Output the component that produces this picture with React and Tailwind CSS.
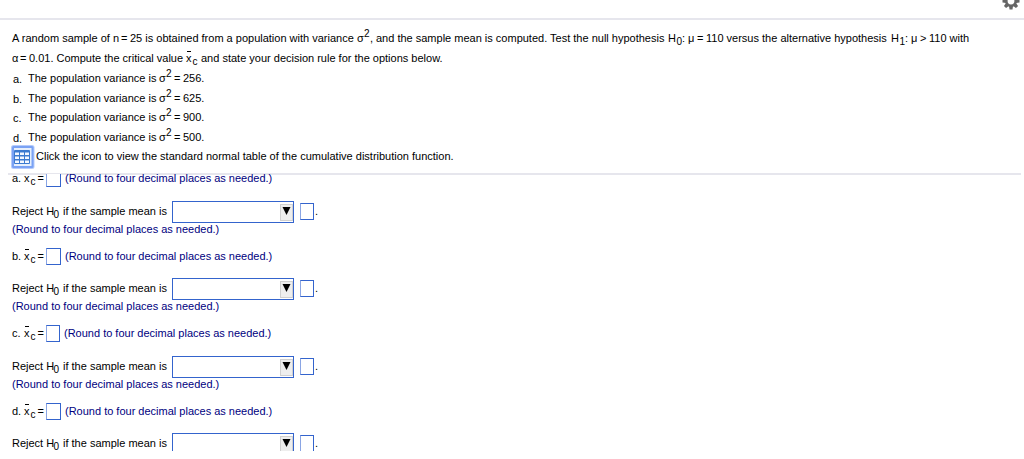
import clsx from "clsx";

const parts = [
  { label: "a.", value: "256.", row: "mb-1" },
  { label: "b.", value: "625.", row: "mb-[3px]" },
  { label: "c.", value: "900.", row: "mb-1" },
  { label: "d.", value: "500.", row: "mb-[3px]" },
];

// spacing differs by a pixel between the answers
const answers = [
  { label: "a.", block: "h-[78px]", gap: "mb-[14px]" },
  { label: "b.", block: "h-[77px]", gap: "mb-[13px]" },
  { label: "c.", block: "h-[78px]", gap: "mb-[14px]" },
  { label: "d.", block: "h-[78px]", gap: "mb-[13px]" },
];

function T({ className, children }) {
  return (
    <span className={clsx("block shrink-0 whitespace-pre", className)}>
      {children}
    </span>
  );
}

function Sup({ className, children }) {
  return (
    <T className={clsx("-mt-1 pl-px text-[10px]", className)}>{children}</T>
  );
}

function Sub({ className, children }) {
  return (
    <T className={clsx("pl-[0.5px] pt-1 text-[10px]", className)}>{children}</T>
  );
}

// x with a short bar over it
function XBar({ className }) {
  return (
    <T className={clsx("relative", className)}>
      x
      <span className="absolute left-px top-px h-px w-1 bg-black" />
    </T>
  );
}

function Divider({ className }) {
  return <div className={clsx("h-[2px] shrink-0 bg-[#e6e6ed]", className)} />;
}

function GearIcon() {
  return (
    <svg width="18" height="18" viewBox="0 0 18 18" fill="#666">
      <g>
        {[0, 45, 90, 135, 180, 225, 270, 315].map((a) => (
          <path key={a} d="M7 4 7.5 0.5h3L11 4z" transform={`rotate(${a} 9 9)`} />
        ))}
      </g>
      <circle cx="9" cy="9" r="4.7" fill="none" stroke="#666" strokeWidth="2.6" />
    </svg>
  );
}

function TableIcon() {
  return (
    <svg width="24" height="24" viewBox="0 0 24 24" className="block">
      <rect x="0" y="0" width="23.5" height="24" rx="2.5" fill="#b5cbfa" />
      <rect x="1" y="1" width="21.5" height="22" rx="1.5" fill="#7aa2f4" />
      <rect x="3" y="3" width="17.5" height="18" fill="#e6effc" />
      <rect x="3" y="5" width="16" height="14" rx="1" fill="#3c7bd0" />
      {[8, 12, 16].map((y) =>
        [4, 9, 14].map((x) => (
          <rect key={`${x}-${y}`} x={x} y={y - 0.5} width="4" height="2.5" fill="#f4f8ff" />
        )),
      )}
    </svg>
  );
}

function InputBox({ className }) {
  return (
    <div
      className={clsx(
        "h-[17px] shrink-0 border border-[#3464cd] border-l-[#8aa5e4] bg-white",
        className,
      )}
    />
  );
}

function Dropdown() {
  return (
    <div className="flex h-[22px] w-[122px] shrink-0 items-center justify-end border border-[#3464cd] bg-white">
      <div className="flex h-[17px] w-[13px] items-center justify-center border border-[#d0d0d0] bg-[#eeeeee]">
        <svg width="9" height="8" viewBox="0 0 9 8" className="-mt-[2px]">
          <path d="M0.5 0h8L4.5 8z" fill="#000" />
        </svg>
      </div>
    </div>
  );
}

function Answer({ label, block, gap }) {
  return (
    <div className={clsx("shrink-0", block)}>
      <div className={clsx("flex h-[17px]", gap)}>
        <T className="w-3">{label}</T>
        <XBar className="w-[6px]" />
        <Sub className="w-[7px]">c</Sub>
        <T className="w-[9px] pl-[0.5px]">=</T>
        <InputBox className={clsx("mr-1", label === "c." ? "w-[14px]" : "w-[15px]")} />
        <T className="text-[#000080]">(Round to four decimal places as needed.)</T>
      </div>
      <div className="flex h-[22px]">
        <T className="mt-[2px] w-[41px]">Reject H</T>
        <Sub className="mt-[2px] w-[10px]">0</Sub>
        <T className="mt-[2px] w-[109px]">if the sample mean is</T>
        <Dropdown />
        <InputBox className="ml-[6px] mt-[2px] w-[14px]" />
        <T className="mt-[2px] pl-px">.</T>
      </div>
      <T className="-mt-[2px] text-[#000080]">(Round to four decimal places as needed.)</T>
    </div>
  );
}

export default function App() {
  return (
    <div className="flex h-[459px] w-[1024px] flex-col overflow-hidden bg-white font-['Liberation_Sans',Arial,sans-serif] text-[11px] leading-4 text-black">
      <div className="flex h-[18px] shrink-0 justify-end pr-1">
        <div className="-mt-2">
          <GearIcon />
        </div>
      </div>
      <Divider />

      <div className="h-[153px] shrink-0 pl-3 pt-[10px]">
        <div className="mb-1 flex h-4">
          <T className="w-[109px]">A random sample of n</T>
          <T className="w-[9px]">=</T>
          <T className="w-[227px]">25 is obtained from a population with variance</T>
          <T className="w-[6px]">σ</T>
          <Sup className="w-[7px]">2</Sup>
          <T className="w-[6px]">,</T>
          <T className="w-[292px]">and the sample mean is computed. Test the null hypothesis</T>
          <T className="w-2">H</T>
          <Sub className="w-[6px]">0</Sub>
          <T className="w-[6px]">:</T>
          <T className="w-[9px]">μ</T>
          <T className="w-[9px]">=</T>
          <T className="w-[185px]">110 versus the alternative hypothesis</T>
          <T className="w-2">H</T>
          <Sub className="w-[6px]">1</Sub>
          <T className="w-[6px]">:</T>
          <T className="w-[9px]">μ</T>
          <T className="w-[9px]">&gt;</T>
          <T>110 with</T>
        </div>
        <div className="mb-1 flex h-4">
          <T className="w-2">α</T>
          <T className="w-[9px]">=</T>
          <T className="w-[157px]">0.01. Compute the critical value</T>
          <XBar className="w-[6px]" />
          <Sub className="w-[9px]">c</Sub>
          <T>and state your decision rule for the options below.</T>
        </div>
        {parts.map((p) => (
          <div key={p.label} className={clsx("flex h-4", p.row)}>
            <T className="mt-px w-4 pl-px">{p.label}</T>
            <T className="w-[131px]">The population variance is</T>
            <T className="w-[6px]">σ</T>
            <Sup className="w-[9px]">2</Sup>
            <T className="w-[9px]">=</T>
            <T>{p.value}</T>
          </div>
        ))}
        <div className="flex h-6">
          <div className="-ml-px -mt-[3px] w-[25px]">
            <TableIcon />
          </div>
          <T>Click the icon to view the standard normal table of the cumulative distribution function.</T>
        </div>
      </div>
      <Divider className="ml-2 mr-[3px]" />

      <div className="-mt-px h-[277px] shrink-0 overflow-hidden pl-3">
        <div className="-mt-1">
          {answers.map((a) => (
            <Answer key={a.label} {...a} />
          ))}
        </div>
      </div>
    </div>
  );
}
